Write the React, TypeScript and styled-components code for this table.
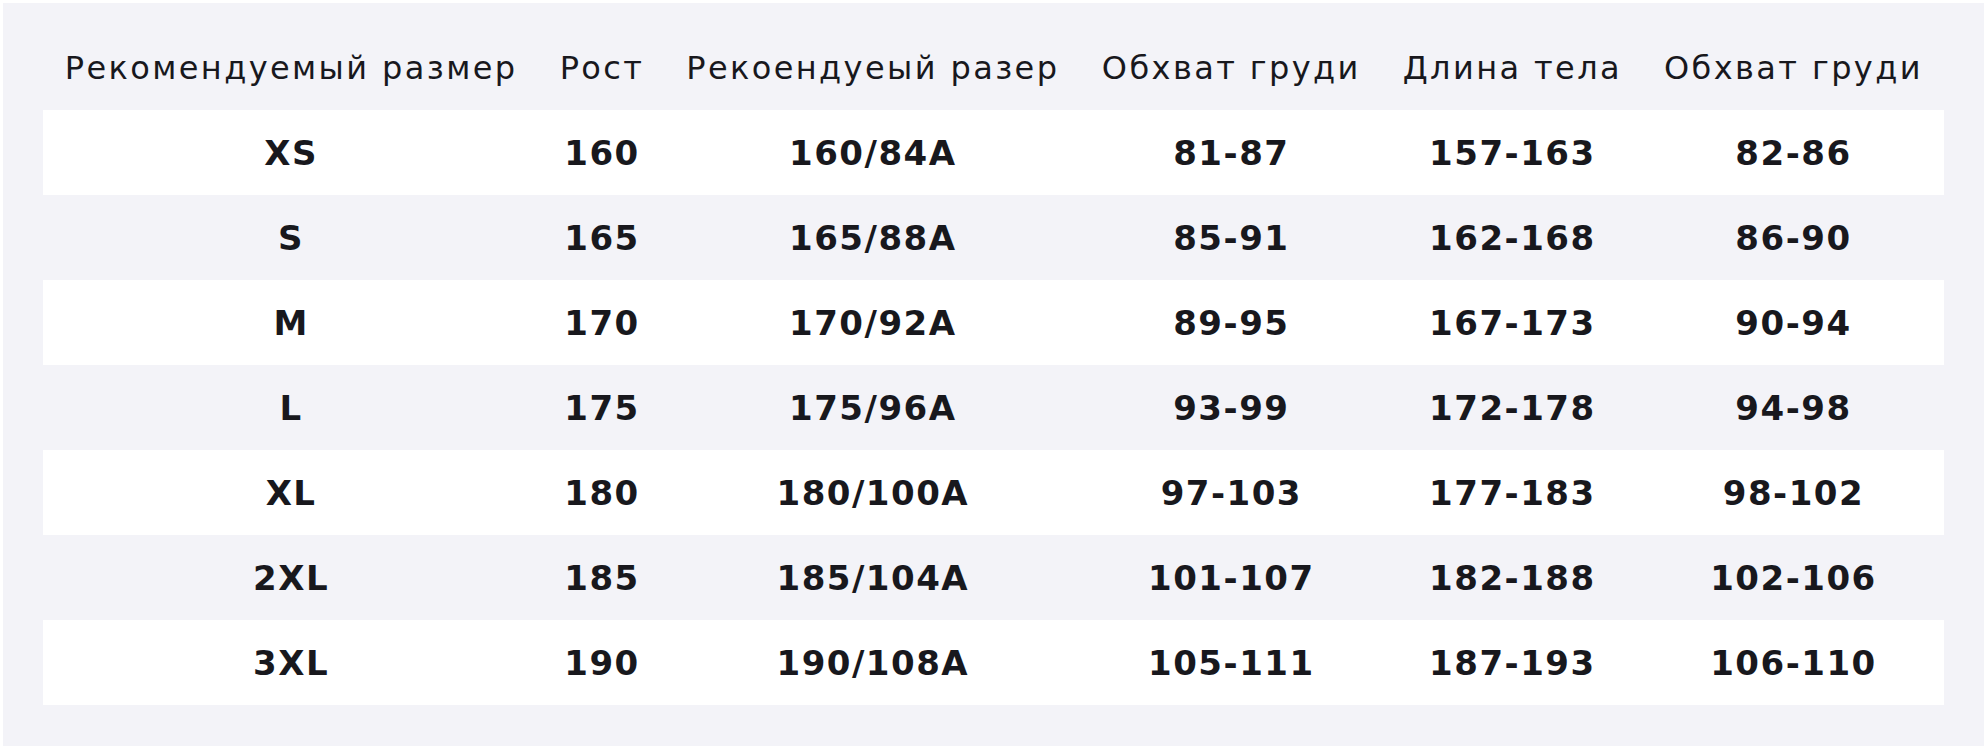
import React from "react";
import styled, { createGlobalStyle } from "styled-components";

const GlobalStyle = createGlobalStyle`
  html, body {
    margin: 0;
    padding: 0;
    background: #ffffff;
  }
  body {
    padding: 3px;
    font-family: "DejaVu Sans", Verdana, sans-serif;
    color: #18181d;
  }
`;

const Panel = styled.div`
  background: #f3f3f8;
  padding: 40px 40px 41px;
`;

const Table = styled.table`
  width: 100%;
  border-collapse: separate;
  border-spacing: 0;
`;

const HeadCell = styled.th`
  font-weight: 400;
  font-size: 32px;
  letter-spacing: 2.4px;
  padding: 6px 20px 23px;
  text-align: center;
  white-space: nowrap;
`;

const Row = styled.tr<{ $striped: boolean }>`
  height: 85px;
  & > td {
    background: ${(p) => (p.$striped ? "#ffffff" : "transparent")};
  }
`;

const Cell = styled.td`
  font-weight: 700;
  font-size: 34px;
  letter-spacing: 1.5px;
  text-align: center;
  padding: 0 20px;
  border-top: 1px solid transparent;
  border-bottom: 1px solid transparent;
  background-clip: padding-box;
  white-space: nowrap;
`;

const headers = [
  "Рекомендуемый размер",
  "Рост",
  "Рекоендуеый разер",
  "Обхват груди",
  "Длина тела",
  "Обхват груди",
];

const rows = [
  ["XS", "160", "160/84A", "81-87", "157-163", "82-86"],
  ["S", "165", "165/88A", "85-91", "162-168", "86-90"],
  ["M", "170", "170/92A", "89-95", "167-173", "90-94"],
  ["L", "175", "175/96A", "93-99", "172-178", "94-98"],
  ["XL", "180", "180/100A", "97-103", "177-183", "98-102"],
  ["2XL", "185", "185/104A", "101-107", "182-188", "102-106"],
  ["3XL", "190", "190/108A", "105-111", "187-193", "106-110"],
];

export default function App() {
  return (
    <>
      <GlobalStyle />
      <Panel>
        <Table>
          <thead>
            <tr>
              {headers.map((h, i) => (
                <HeadCell key={i}>{h}</HeadCell>
              ))}
            </tr>
          </thead>
          <tbody>
            {rows.map((r, i) => (
              <Row key={r[0]} $striped={i % 2 === 0}>
                {r.map((c, j) => (
                  <Cell key={j}>{c}</Cell>
                ))}
              </Row>
            ))}
          </tbody>
        </Table>
      </Panel>
    </>
  );
}
